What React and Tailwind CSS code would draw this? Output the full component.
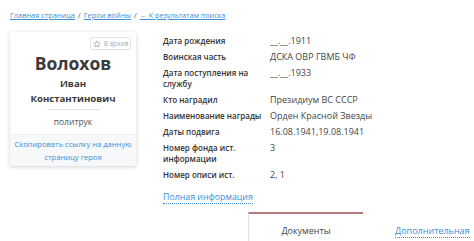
import React from "react";

const rows = [
  ["Дата рождения", "__.__.1911"],
  ["Воинская часть", "ДСКА ОВР ГВМБ ЧФ"],
  ["Дата поступления на службу", "__.__.1933"],
  ["Кто наградил", "Президиум ВС СССР"],
  ["Наименование награды", "Орден Красной Звезды"],
  ["Даты подвига", "16.08.1941,19.08.1941"],
  ["Номер фонда ист. информации", "3"],
  ["Номер описи ист.", "2, 1"],
];

function StarIcon() {
  return (
    <svg width="8" height="8" viewBox="0 0 24 24" fill="none" stroke="#9aa0a6" strokeWidth="2.2" strokeLinejoin="round">
      <path d="M12 2.5l2.9 6.1 6.6.8-4.9 4.6 1.3 6.6L12 17.3l-5.9 3.3 1.3-6.6-4.9-4.6 6.6-.8z" />
    </svg>
  );
}

export default function App() {
  return (
    <div className="bg-white w-[474px] h-[241px] overflow-hidden px-[10px] pt-[9px] text-[#333] font-['Open_Sans',sans-serif]">
      {/* Breadcrumbs */}
      <div className="flex items-center gap-[3px] text-[7.4px] leading-[12px] text-[#3d8ed8] whitespace-nowrap">
        <a className="underline">Главная страница</a>
        <span className="text-[#555]">/</span>
        <a className="underline">Герои войны</a>
        <span className="text-[#555]">/</span>
        <a className="underline text-[7.2px]">← К результатам поиска</a>
      </div>

      <div className="flex mt-[11px]">
        {/* Hero card */}
        <div className="w-[126px] h-[134px] shrink-0 bg-white shadow-[0_1px_4px_rgba(0,0,0,0.18)] flex flex-col">
          <div className="flex flex-col items-center px-[5px] pt-[5px] pb-[6px]">
            <div className="self-end flex items-center gap-[3px] h-[13px] w-[41px] justify-center border border-[#e3e3e3] rounded-[2px] text-[6.5px] text-[#aaa]">
              <StarIcon />
              <span>В архив</span>
            </div>
            <div className="mt-[2px] text-[17.5px] leading-[22px] font-bold text-[#3a3a3a]">Волохов</div>
            <div className="mt-[2px] text-[9.6px] leading-[15px] font-bold text-[#3a3a3a]">Иван</div>
            <div className="text-[9.6px] leading-[15px] font-bold text-[#3a3a3a]">Константинович</div>
            <div className="mt-[3px] w-[53px] h-px bg-[#e2e2e2]" />
            <div className="mt-[6px] text-[8.5px] leading-[12px] text-[#555]">политрук</div>
          </div>
          <div className="flex-1 bg-[#f6f8fa] border-t border-[#eceef0] flex flex-col items-center justify-center text-center text-[7.6px] leading-[13px] text-[#3d8ed8] whitespace-nowrap">
            <span>Скопировать ссылку на данную</span>
            <span>страницу героя</span>
          </div>
        </div>

        {/* Info table */}
        <div className="ml-[27px] mt-[2.5px] flex flex-col">
          <div className="grid grid-cols-[107px_190px] gap-y-[5px] leading-[11px]">
            {rows.map(([label, value]) => (
              <React.Fragment key={label}>
                <div className="font-semibold text-[8px] text-[#333] pr-[6px]">{label}</div>
                <div className="text-[9px] text-[#444]">{value}</div>
              </React.Fragment>
            ))}
          </div>
          <div className="mt-[11px] text-[8.8px] leading-[12px] text-[#3d8ed8]">
            <span className="border-b border-dotted border-[#3d8ed8]">Полная информация</span>
          </div>
        </div>
      </div>

      {/* Tabs */}
      <div className="flex ml-[238px] mt-[9px]">
        <div className="w-[115px] shrink-0 h-[40px] border-t-[2px] border-[#b97b7e] border-l border-l-[#e0e0e0] flex justify-center pt-[11px] text-[9px] leading-[12px] text-[#444]">
          Документы
        </div>
        <div className="ml-[32px] shrink-0 pt-[13px] text-[9px] leading-[12px] text-[#3d8ed8] whitespace-nowrap">
          <span className="border-b border-dotted border-[#3d8ed8]">Дополнительная</span>
        </div>
      </div>
    </div>
  );
}
